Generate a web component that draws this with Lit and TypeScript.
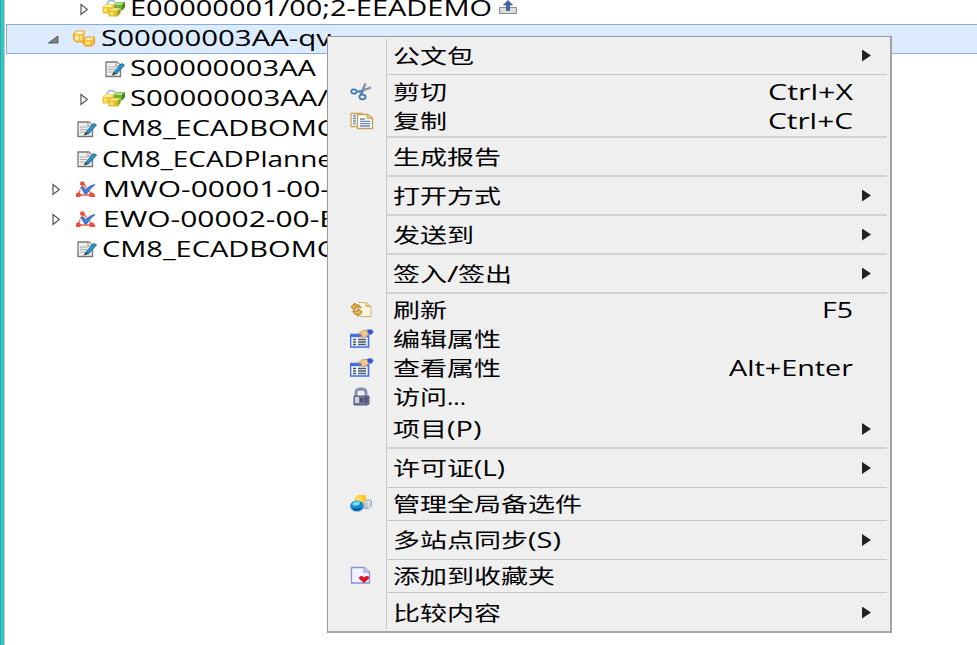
import { LitElement, html, svg, css } from "lit";
import { customElement, property } from "lit/decorators.js";

// Text stretched horizontally so that its box takes a given width.
@customElement("fit-text")
class FitText extends LitElement {
  @property() text = "";
  @property({ type: Number }) width = 0;
  static styles = css`
    :host { display: block; white-space: nowrap; }
    .run { display: inline-block; transform-origin: 0 50%; white-space: pre; }
  `;
  updated() {
    const run = this.renderRoot.querySelector(".run") as HTMLElement;
    this.style.width = this.width + "px";
    run.style.transform = `scaleX(${this.width / run.getBoundingClientRect().width})`;
  }
  render() {
    return html`<span class="run">${this.text}</span>`;
  }
}

const icons: Record<string, unknown> = {
  closed: svg`<path d="M5 5.500V15.500L11.300 10.500Z" fill="#fff" stroke="#555" stroke-width="1.200"/>`,
  open: svg`<path d="M1.500 14H11V7Z" fill="#858585" stroke="#4a4a4a" stroke-width=".9"/>`,
  rev: svg`
    <path d="M5 5Q6 1.500 9.500 1.500Q13 1.500 13.500 5" fill="none" stroke="#9db4cb" stroke-width="1.500"/>
    <path d="M12 6L15 3H23V8L20 11.500H12Z" fill="#6db33a"/>
    <path d="M12.500 6L15.500 3.500H22L19.500 6Z" fill="#b5dc86"/>
    <path d="M20 6L23 3.500V8L20 11.500Z" fill="#3f8a25"/>
    <path d="M.500 8L3.500 5H12V11L9 14.500H.500Z" fill="#f3c336"/>
    <path d="M1 8L4 5.500H11.500L9 8Z" fill="#fff09a"/><path d="M2 9.500H5V12.500H2Z" fill="#ffe88a"/>
    <path d="M6.500 11.500L9.500 9H18.500V14L15.500 17.500H6.500Z" fill="#e3bd2a"/>
    <path d="M7 11.500L10 9.500H18L15 11.500Z" fill="#f8f08e"/><path d="M8 13H11.500V16H8Z" fill="#fbe773"/>
    <path d="M15.500 12L18.500 9.500V14L15.500 17.500Z" fill="#91a225"/>`,
  item: svg`
    <path d="M.500 4.500L3.500 2H12L10.500 7V13H3L.500 10.500Z" fill="#f6bd3b" stroke="#e99a27"/>
    <path d="M1.500 4.500L4 2.500H11.500L9 5.500Z" fill="#fff3c6"/><path d="M2 6.500H5.500V11.500H3.500L2 10Z" fill="#fff0aa"/>
    <path d="M7 7H9.500V11.500H7Z" fill="#ffe07a"/>
    <path d="M10.500 10.500L13 8H21.500V14L19 17H12.500L10.500 15Z" fill="#f9bf37" stroke="#e09021"/>
    <path d="M11.500 10.500L14 8.500H21L18.500 11Z" fill="#fff3b5"/><path d="M12 12.500H17.500V15.500H13Z" fill="#ffe273"/>`,
  form: svg`
    <path d="M2 3H13L16.500 6.500V17.500H2Z" fill="#efefed" stroke="#777" stroke-width="1.300"/>
    <path d="M12 3V7H16.500" fill="#fff" stroke="#888"/>
    <path d="M4 8H12M4 10.500H11M4 13H9" stroke="#aaa" stroke-width="1"/>
    <path d="M9.500 13.500L17.500 4.500L20.500 6L12.500 15Z" fill="#2593d0" stroke="#175c89" stroke-width=".8"/>
    <path d="M9.500 13.500L12.500 15L7.500 16.500Z" fill="#2b2b2b"/>`,
  order: svg`
    <path d="M7.500 3.500L17.500 16H2.500L8.500 5" fill="none" stroke="#f08672" stroke-width="1.800"/>
    <path d="M5.500 2.500H9L10 6L7.500 7L5 5.500Z M1 14.500L4 13L6.500 16L5 18H1Z M14.500 14L18 13.500L20 16V18H14.500Z" fill="#e9503c"/>
    <path d="M6 9.500L10.500 13L19.500 6" fill="none" stroke="#fff" stroke-width="3.600"/>
    <path d="M6 8.500L8.500 8L11 11Q14 6.500 20 5.500Q15 9.500 11.500 15H10Z" fill="#3f7fdd" stroke="#2c62c4" stroke-width=".9"/>`,
  checkout: svg`
    <path d="M.500 8.500H17.500V14.500H.500Z" fill="#dcdcdc" stroke="#8b8b8b"/>
    <path d="M9 1.500L13.500 6H10.500V11.500H7.500V6H4.500Z" fill="#3d66ae" stroke="#2c4c86" stroke-width=".7"/>`,
  cut: svg`
    <path d="M8 10L21 5.500M10.500 13L15.500 1.500" stroke="#8490a3" stroke-width="2.300"/>
    <ellipse cx="4" cy="9.500" rx="2.700" ry="2.100" fill="#edf7fc" stroke="#3579b4" stroke-width="1.700"/>
    <ellipse cx="12.500" cy="15" rx="3" ry="2.300" fill="#edf7fc" stroke="#3579b4" stroke-width="1.700"/>
    <path d="M7 9.500L13 9L12 12" fill="none" stroke="#4c7fb0" stroke-width="1.400"/>`,
  copy: svg`
    <path d="M1 2.500H12V15.500H1Z" fill="#fffdf2" stroke="#c8a654" stroke-width="1.300"/>
    <path d="M3 5H6M3 7.500H6M3 10H6M3 12.500H6" stroke="#6786ba" stroke-width="1.300"/>
    <path d="M7.500 3.500H17.500L22.500 7V17.500H7.500Z" fill="#fffef8" stroke="#c1a15b" stroke-width="1.300"/>
    <path d="M17 3.500V7.500H22" fill="#e9c965" stroke="#c8a654"/>
    <path d="M10 8H15M10 10.300H20M10 12.600H20M10 15H20" stroke="#6786ba" stroke-width="1.300"/>`,
  refresh: svg`
    <path d="M9 2.500H16L21 6.500V16.500H9Z" fill="#fdf6dd" stroke="#cbb374"/>
    <path d="M16 2.500V6.500H21" fill="#ead18e" stroke="#c5a85c"/>
    <path d="M2 3H11L12 8V14L10 17H7V11H2Z" fill="#f2eee2"/>
    <path d="M1 7L5 3V5Q9 3.500 11 7.500Q8 6.500 5 7.500V10Z" fill="#edb748" stroke="#a86f13" stroke-width=".9"/>
    <path d="M12 12L8 8.500V11Q5 12 3 10.500Q3 15 8 14.500V16.500Z" fill="#edb748" stroke="#a86f13" stroke-width=".9"/>`,
  props: svg`
    <path d="M.500 5.500H18.500V18H.500Z" fill="#f5fbff" stroke="#426ee5" stroke-width="1.700"/>
    <path d="M1 7H18" stroke="#426ee5" stroke-width="2.400"/>
    <path d="M3 10.500H6M8 10.500H16M3 13H6M8 13H16M3 15.500H6M8 15.500H16" stroke="#46566b" stroke-width="1.300"/>
    <path d="M8 5L13 1.500H19V5L15 8.500L11 8L12 5.500Z" fill="#f3cb87" stroke="#b89262" stroke-width=".8"/>
    <path d="M17.500 .500H22L23.500 3L21 6L17.500 4Z" fill="#3155d8"/>`,
  lock: svg`
    <path d="M6 10V5Q6 2 11 2Q16 2 16 5V10" fill="none" stroke="#858caf" stroke-width="2.800"/>
    <path d="M4 9H19V17L17 18H4Z" fill="#76749b" stroke="#5d5986"/>
    <path d="M5 10H9V16H5Z" fill="#d3d4e2"/><path d="M14 10H18V16H14Z" fill="#5b577e"/>
    <path d="M11.500 11V15" stroke="#39365c" stroke-width="2"/>`,
  alt: svg`
    <path d="M5 4L8 1H16V7L13 9H5Z" fill="#ffc928"/><path d="M6 3.500H12V8H6Z" fill="#ffe264"/>
    <ellipse cx="7" cy="12" rx="6.800" ry="5.500" fill="#1689ce"/>
    <path d="M2 10Q5 6 10 8L9 11L4 12Z" fill="#7bdcf2"/><path d="M2 14Q7 16 12 13Q9 18 4 16Z" fill="#0c4f99"/>
    <path d="M14 8L17 6H21.500V12L19 14.500H14Z" fill="#c3cacf" stroke="#929aa1" stroke-width=".8"/>
    <path d="M14 8H19V14.500M19 8L21.500 6" fill="none" stroke="#edf2f5"/>`,
  fav: svg`
    <path d="M1.500 1.500H14L19.500 6V17H1.500Z" fill="#f1f3ff" stroke="#8b91d0" stroke-width="1.300"/>
    <path d="M14 1.500V6H19.500" fill="#cdd3f4" stroke="#8b91d0"/>
    <path d="M14 17L9 12.500Q9 10 11.500 10Q13.500 10 14 11.500Q15 10 17 10Q19.500 10 19 12.500Z" fill="#d91428"/>`,
};
const icon = (name?: string) =>
  html`<svg class="icon" width="24" height="20" viewBox="0 0 24 20">${name ? icons[name] : ""}</svg>`;

type Row = { indent: number; twisty?: string; icon: string; text: string; w: number; out?: boolean; sel?: boolean };
const rows: Row[] = [
  { indent: 69, twisty: "closed", icon: "rev", text: "E00000001/00;2-EEADEMO", w: 362, out: true },
  { indent: 40, twisty: "open", icon: "item", text: "S00000003AA-qv", w: 230, sel: true },
  { indent: 69, icon: "form", text: "S00000003AA", w: 186 },
  { indent: 69, twisty: "closed", icon: "rev", text: "S00000003AA/", w: 198 },
  { indent: 41, icon: "form", text: "CM8_ECADBOMC", w: 233 },
  { indent: 41, icon: "form", text: "CM8_ECADPlanne", w: 231 },
  { indent: 41, twisty: "closed", icon: "order", text: "MWO-00001-00-", w: 227 },
  { indent: 41, twisty: "closed", icon: "order", text: "EWO-00002-00-E", w: 233 },
  { indent: 41, icon: "form", text: "CM8_ECADBOMC", w: 233 },
];

type Item = { text: string; w: number; h: number; icon?: string; key?: string; kw?: number; sub?: boolean };
type Section = { pad?: number; items: Item[]; sep?: "thin" | "thick" };
const sections: Section[] = [
  { items: [{ text: "公文包", w: 81, h: 37, sub: true }], sep: "thin" },
  { pad: 2, items: [
    { text: "剪切", w: 54, h: 29, icon: "cut", key: "Ctrl+X", kw: 85 },
    { text: "复制", w: 54, h: 30, icon: "copy", key: "Ctrl+C", kw: 85 } ], sep: "thick" },
  { items: [{ text: "生成报告", w: 108, h: 37 }], sep: "thick" },
  { items: [{ text: "打开方式", w: 108, h: 37, sub: true }], sep: "thick" },
  { items: [{ text: "发送到", w: 81, h: 37, sub: true }], sep: "thick" },
  { items: [{ text: "签入/签出", w: 119.5, h: 37, sub: true }], sep: "thick" },
  { pad: 1, items: [
    { text: "刷新", w: 54, h: 29, icon: "refresh", key: "F5", kw: 31 },
    { text: "编辑属性", w: 108, h: 29, icon: "props" },
    { text: "查看属性", w: 108, h: 29, icon: "props", key: "Alt+Enter", kw: 124 },
    { text: "访问...", w: 73, h: 29, icon: "lock" },
    { text: "项目(P)", w: 88.500, h: 36, sub: true } ], sep: "thick" },
  { items: [{ text: "许可证(L)", w: 112, h: 38, sub: true }], sep: "thin" },
  { items: [{ text: "管理全局备选件", w: 189, h: 32, icon: "alt" }], sep: "thin" },
  { items: [{ text: "多站点同步(S)", w: 168, h: 38, sub: true }], sep: "thin" },
  { items: [{ text: "添加到收藏夹", w: 162, h: 32, icon: "fav" }], sep: "thin" },
  { items: [{ text: "比较内容", w: 108, h: 39, sub: true }] },
];

// Han glyphs are 27px wide each; the Latin run shares what is left.
const HAN = 27;
const label = (text: string, width: number) => {
  const parts = text.match(/[\u4e00-\u9fff]+|[^\u4e00-\u9fff]+/g) ?? [];
  const han = (text.match(/[\u4e00-\u9fff]/g) ?? []).length;
  return parts.map((p) => /[\u4e00-\u9fff]/.test(p)
    ? html`<fit-text class="han" .text=${p} .width=${p.length * HAN}></fit-text>`
    : html`<fit-text class="latin" .text=${p} .width=${width - han * HAN}></fit-text>`);
};

@customElement("app-root")
class AppRoot extends LitElement {
  static styles = css`
    :host { display: block; position: relative; width: 977px; height: 645px; overflow: hidden; background: #fff;
      color: #000; font: 22px/30px "Open Sans", "Noto Sans CJK SC", sans-serif; }
    .view { display: flex; height: 645px; }
    .edge { width: 3px; flex: none; background: #33c6c3; border-left: 1px solid #2aa9a8; border-right: 1px solid #c4c4c8; }
    .tree { flex: 1; margin-top: -6px; }
    .row { display: flex; align-items: center; height: 30.100px; margin-left: 1px; padding-bottom: 1px; box-sizing: border-box; border: 1px solid transparent; border-right: 0; }
    .row.sel { background: #dcebfe; border-color: #84acdd; }
    .indent { flex: none; }
    .icon { display: block; flex: none; }
    .twisty { width: 28px; flex: none; display: flex; }
    .kind { flex: none; width: 26px; }
    .kind.rev, .kind.item { margin-left: -2px; width: 28px; }
    .kind.order { margin-left: -1px; width: 28px; }
    .name { padding-bottom: 3px; }
    .out { margin-left: 7px; }
    .menu { position: absolute; left: 327px; top: 36px; width: 565px; height: 597px; box-sizing: border-box;
      background: #efefef; border: 1px solid #999; border-right: 2px solid #a2a2a2; border-bottom: 2px solid #a8a8a8; line-height: 28px; display: flex; }
    .rule { width: 1px; margin: 2px 0; background: #c9c9c9; position: absolute; left: 58px; top: 0; bottom: 0; }
    .list { flex: 1; margin-right: 3px; }
    .thin { height: 1px; margin-left: 59px; background: #c4c4c4; }
    .thick { height: 2px; margin-left: 59px; background: #d2d2d2; }
    .entry { display: flex; align-items: center; }
    .pic { width: 42.500px; padding-left: 22px; flex: none; }
    .han { font-size: 20.500px; }
    .latin, .key { padding-bottom: 2px; }
    .key { margin-left: auto; margin-right: 34px; }
    .arrow { margin-left: auto; margin-right: 16px; width: 9px; height: 12px; background: #222; clip-path: polygon(0 0, 100% 50%, 0 100%); }
    .p1 { padding-top: 1px; } .p2 { padding-top: 2px; }
    .h29 { height: 29px; } .h30 { height: 30px; } .h32 { height: 32px; } .h36 { height: 36px; }
    .h37 { height: 37px; } .h38 { height: 38px; } .h39 { height: 39px; }
  `;
  render() {
    return html`
      <div class="view">
        <div class="edge"></div>
        <div class="tree">
          ${rows.map((r) => html`
            <div class="row ${r.sel ? "sel" : ""}">
              <div class="indent" style="width:${r.indent}px"></div>
              <div class="twisty">${icon(r.twisty)}</div>
              <div class="kind ${r.icon}">${icon(r.icon)}</div>
              <fit-text class="name" .text=${r.text} .width=${r.w}></fit-text>
              ${r.out ? html`<span class="out">${icon("checkout")}</span>` : ""}
            </div>`)}
        </div>
      </div>
      <div class="menu">
        <div class="rule"></div>
        <div class="list">
          ${sections.map((s) => html`
            <div class="section p${s.pad ?? 0}">
              ${s.items.map((i) => html`
                <div class="entry h${i.h}">
                  <div class="pic">${icon(i.icon)}</div>
                  ${label(i.text, i.w)}
                  ${i.key ? html`<fit-text class="key" .text=${i.key} .width=${i.kw}></fit-text>` : ""}
                  ${i.sub ? html`<div class="arrow"></div>` : ""}
                </div>`)}
            </div>
            ${s.sep ? html`<div class=${s.sep}></div>` : ""}`)}
        </div>
      </div>`;
  }
}
